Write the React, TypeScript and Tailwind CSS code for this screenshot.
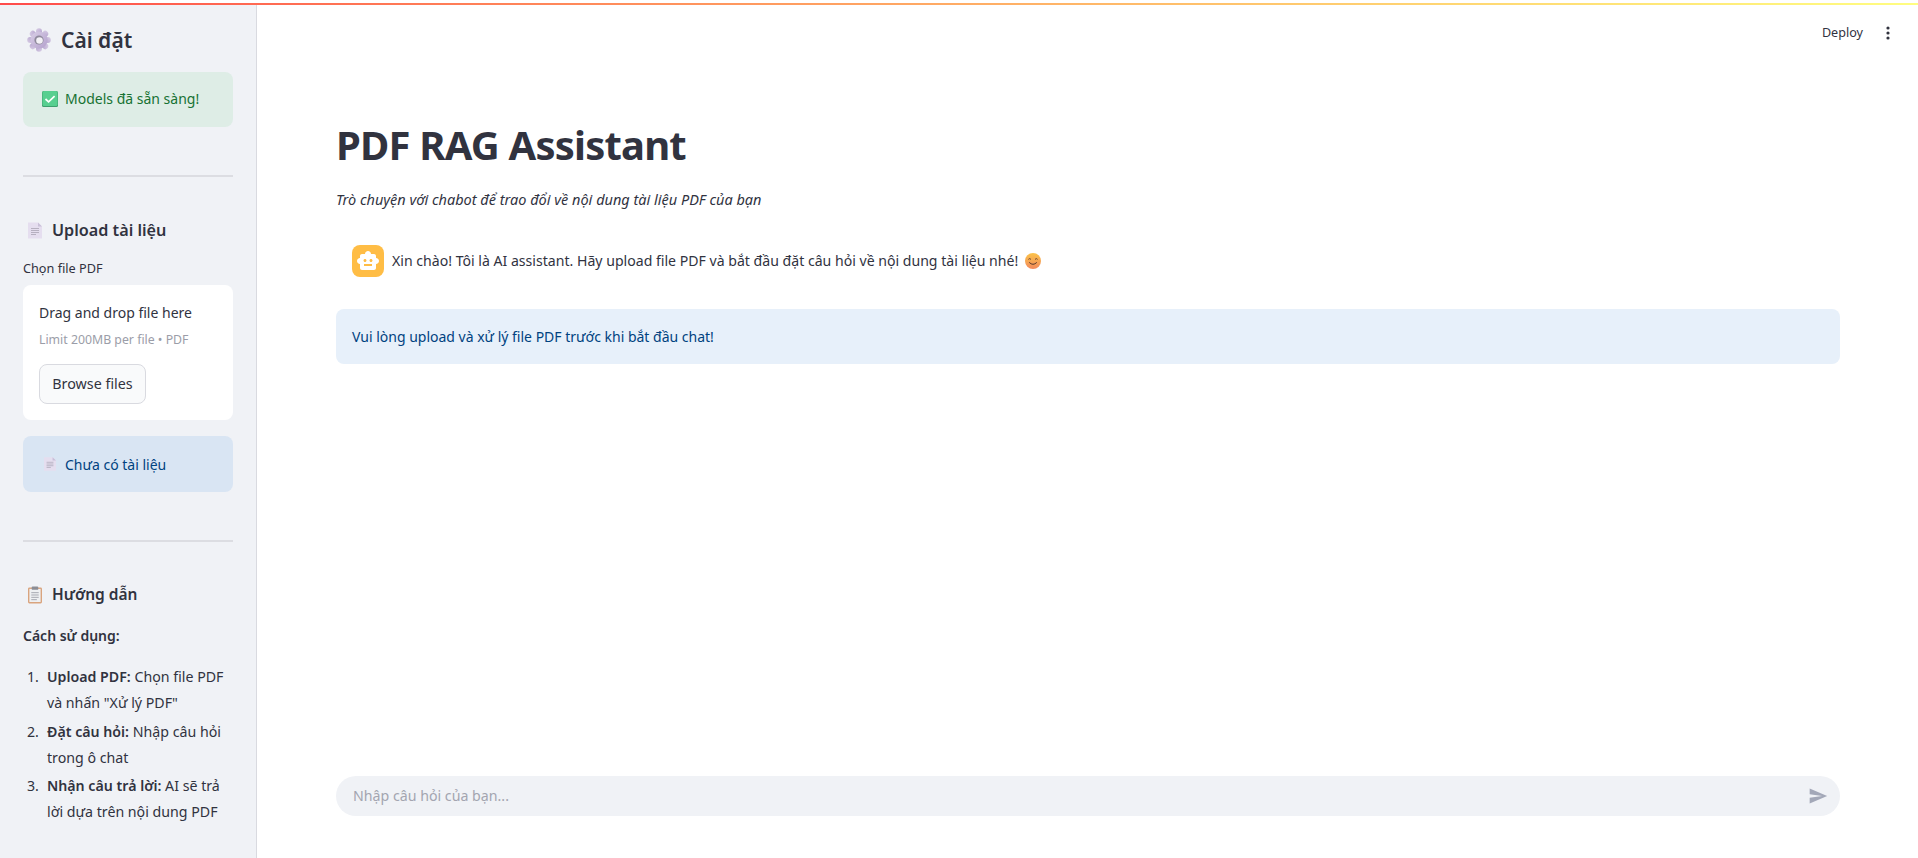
const fontClass = "font-['Noto_Sans',sans-serif]";

function GearEmoji() {
  return (
    <svg width="24" height="24" viewBox="0 0 24 24" className="shrink-0">
      <defs>
        <linearGradient id="gear" x1="0" y1="0" x2="1" y2="1">
          <stop offset="0" stopColor="#d9cfe6" />
          <stop offset="1" stopColor="#b3a0cc" />
        </linearGradient>
      </defs>
      <g fill="url(#gear)">
        {[0, 45, 90, 135, 180, 225, 270, 315].map((a) => (
          <circle key={a} cx="12" cy="3.2" r="3" transform={`rotate(${a} 12 12)`} />
        ))}
        <circle cx="12" cy="12" r="8.6" />
      </g>
      <circle cx="12" cy="12" r="4.6" fill="#8f8a9c" />
      <circle cx="12.5" cy="12.5" r="3.3" fill="#f3f1f6" />
    </svg>
  );
}

function CheckEmoji() {
  return (
    <svg width="16" height="16" viewBox="0 0 16 16" className="shrink-0">
      <rect x="0" y="0" width="16" height="16" rx="1.5" fill="#3e9e6e" />
      <rect x="0.5" y="0" width="15" height="15" rx="1.5" fill="#58cf90" />
      <path d="M3.5 8 6.6 10.8l6-5.6" fill="none" stroke="#fff" strokeWidth="1.7" />
    </svg>
  );
}

function DocEmoji({ w, h }: { w: number; h: number }) {
  return (
    <svg width={w} height={h} viewBox="0 0 14 16" className="shrink-0">
      <path d="M0 0h10l4 4v12H0z" fill="#e5deef" />
      <path d="M10 0l4 4h-4z" fill="#c9bfd8" />
      <path d="M3 6h8M3 8h8M3 10h8M3 12h5" stroke="#a9a4b4" strokeWidth="0.8" />
    </svg>
  );
}

function ClipboardEmoji() {
  return (
    <svg width="14" height="18" viewBox="0 0 15 18" className="shrink-0">
      <rect x="0" y="1" width="15" height="17" rx="1.5" fill="#d9a47e" />
      <rect x="1.5" y="2.5" width="12" height="14" fill="#eef0f2" />
      <rect x="4" y="0" width="7" height="3.5" rx="1" fill="#8b8d95" />
      <path d="M3.5 6.5h8M3.5 9h8M3.5 11.5h8M3.5 14h6" stroke="#9a9ca6" strokeWidth="0.9" />
    </svg>
  );
}

function SmileEmoji() {
  return (
    <svg width="16" height="16" viewBox="0 0 16 16" className="ml-[3px] inline-block align-[-3px]">
      <defs>
        <linearGradient id="smile" x1="0" y1="0" x2="0" y2="1">
          <stop offset="0" stopColor="#fbc34a" />
          <stop offset="1" stopColor="#f28a5c" />
        </linearGradient>
      </defs>
      <circle cx="8" cy="8" r="8" fill="url(#smile)" />
      <path d="M3.4 6.4q1.3-1.6 2.6 0M10 6.4q1.3-1.6 2.6 0" fill="none" stroke="#5b3a2c" strokeWidth="0.9" />
      <path d="M4.2 9.4q3.8 3.8 7.6 0" fill="none" stroke="#5b3a2c" strokeWidth="1" />
    </svg>
  );
}

const steps = [
  { num: "1.", bold: "Upload PDF:", text: 'Chọn file PDF và nhấn "Xử lý PDF"' },
  { num: "2.", bold: "Đặt câu hỏi:", text: "Nhập câu hỏi trong ô chat" },
  { num: "3.", bold: "Nhận câu trả lời:", text: "AI sẽ trả lời dựa trên nội dung PDF" },
];

export default function App() {
  return (
    <div className={`${fontClass} h-[858px] w-[1918px] overflow-hidden bg-white text-[#31333f]`}>
      <div className="mt-[3px] h-[2px] bg-gradient-to-r from-[#ff4b4b] to-[#fffd80]" />
      <div className="flex h-[853px]">
        <aside className="flex w-[257px] shrink-0 flex-col border-r border-[#d9dae0] bg-[#f0f2f6] px-[23px]">
          <div className="mt-[20px] flex h-[30px] items-center gap-[10px] pl-[4px]">
            <GearEmoji />
            <h2 className="text-[21px] font-semibold leading-[30px]">Cài đặt</h2>
          </div>
          <div className="mt-[17px] flex h-[55px] items-center gap-[7px] rounded-lg bg-[#deede6] pb-[1px] pl-[19px] text-[14px] text-[#177233]">
            <CheckEmoji />
            <span className="pb-[1px]">Models đã sẵn sàng!</span>
          </div>
          <hr className="mt-[48px] h-[2px] border-0 bg-[#dcdde2]" />
          <div className="mt-[41px] flex h-[24px] items-center gap-[10px] pl-[5px]">
            <DocEmoji w={14} h={17} />
            <h3 className="text-[16.2px] font-semibold">Upload tài liệu</h3>
          </div>
          <label className="mt-[17px] block text-[12.7px] leading-[18px]">Chọn file PDF</label>
          <section className="mt-[8px] h-[135px] rounded-lg bg-white px-[16px] pt-[17px]">
            <p className="text-[14px] leading-[22px]">Drag and drop file here</p>
            <p className="mt-[7px] text-[12.3px] leading-[18px] text-[#9b9da8]">Limit 200MB per file • PDF</p>
            <button className="mt-[15px] h-[40px] w-[107px] rounded-lg border border-[#d9dae0] bg-[#f9fafb] text-[14.3px]">
              Browse files
            </button>
          </section>
          <div className="mt-[16px] flex h-[56px] items-center gap-[9px] rounded-lg bg-[#d9e5f3] pl-[21px] text-[14px] text-[#004280]">
            <DocEmoji w={12} h={16} />
            <span>Chưa có tài liệu</span>
          </div>
          <hr className="mt-[48px] h-[2px] border-0 bg-[#dcdde2]" />
          <div className="mt-[41px] flex h-[24px] items-center gap-[10px] pl-[5px]">
            <ClipboardEmoji />
            <h3 className="text-[15.5px] font-semibold">Hướng dẫn</h3>
          </div>
          <p className="mt-[16px] text-[14px] font-semibold leading-[26px]">Cách sử dụng:</p>
          <ol className="mt-[15px] flex flex-col gap-[2.5px] pl-[4px] text-[14.2px] leading-[26px]">
            {steps.map((step) => (
              <li key={step.num} className="flex">
                <span className="w-[20px] shrink-0">{step.num}</span>
                <div>
                  <strong className="font-semibold">{step.bold}</strong> {step.text}
                </div>
              </li>
            ))}
          </ol>
        </aside>

        <main className="flex min-w-0 flex-1 flex-col">
          <header className="flex h-[56px] items-center justify-end pr-[28px]">
            <span className="text-[12.6px]">Deploy</span>
            <svg width="4" height="14" viewBox="0 0 4 14" className="ml-[23px]">
              <circle cx="2" cy="2" r="1.6" fill="#31333f" />
              <circle cx="2" cy="7" r="1.6" fill="#31333f" />
              <circle cx="2" cy="12" r="1.6" fill="#31333f" />
            </svg>
          </header>
          <div className="flex flex-1 flex-col pl-[79px] pr-[78px]">
            <h1 className="mt-[54px] text-[40px] font-bold leading-[60px] tracking-[-0.02em]">PDF RAG Assistant</h1>
            <p className="mt-[11px] text-[14.5px] italic leading-[26px]">
              Trò chuyện với chabot để trao đổi về nội dung tài liệu PDF của bạn
            </p>
            <div className="mt-[33px] flex items-center gap-[8px] pl-[16px]">
              <div className="flex h-[32px] w-[32px] items-center justify-center rounded-lg bg-[#ffbd45]">
                <svg width="24" height="24" viewBox="0 0 24 24" fill="#fff">
                  <path d="M20 9V7c0-1.1-.9-2-2-2h-3c0-1.66-1.34-3-3-3S9 3.34 9 5H6c-1.1 0-2 .9-2 2v2c-1.66 0-3 1.34-3 3s1.34 3 3 3v4c0 1.1.9 2 2 2h12c1.1 0 2-.9 2-2v-4c1.66 0 3-1.34 3-3s-1.34-3-3-3zM7.5 11.5c0-.83.67-1.5 1.5-1.5s1.5.67 1.5 1.5S9.83 13 9 13s-1.5-.67-1.5-1.5zM16 17H8v-2h8v2zm-1-4c-.83 0-1.5-.67-1.5-1.5S14.17 10 15 10s1.5.67 1.5 1.5S15.83 13 15 13z" />
                </svg>
              </div>
              <p className="text-[14.1px] leading-[26px]">
                Xin chào! Tôi là AI assistant. Hãy upload file PDF và bắt đầu đặt câu hỏi về nội dung tài liệu nhé! <SmileEmoji />
              </p>
            </div>
            <div className="mt-[32px] flex h-[55px] items-center rounded-lg bg-[#e7f0fa] pl-[16px] text-[14px] text-[#004280]">
              Vui lòng upload và xử lý file PDF trước khi bắt đầu chat!
            </div>
            <div className="mb-[42px] mt-auto flex h-[40px] items-center justify-between rounded-[20px] bg-[#f0f2f6] pl-[17px] pr-[12px]">
              <span className="text-[14.2px] text-[#a3a5b0]">Nhập câu hỏi của bạn...</span>
              <svg width="20" height="20" viewBox="0 0 24 24" fill="#a3a8b8">
                <path d="M2.01 21L23 12 2.01 3 2 10l15 2-15 2z" />
              </svg>
            </div>
          </div>
        </main>
      </div>
    </div>
  );
}
